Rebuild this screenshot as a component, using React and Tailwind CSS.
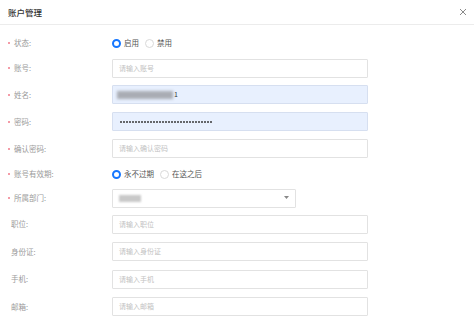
import React from "react";

const F = { fontFamily: '"Noto Sans CJK SC", "Noto Sans", sans-serif' };

function Label({ text, req }) {
  return (
    <div className={`w-[112px] shrink-0 flex items-center text-[7.5px] text-[#9a9a9a] ${req ? "pl-[8px]" : "pl-[11px]"}`}>
      {req && <span className="w-[2px] h-[2px] rounded-full bg-[#f07a8a] mr-[4px]" />}
      <span>{text}</span>
    </div>
  );
}

function Input({ ph, filled, children, w = "w-[256px]" }) {
  return (
    <div
      className={`${w} h-[19px] border rounded-[1px] flex items-center px-[6px] text-[7px] ${
        filled ? "bg-[#e8f0fe] border-[#d6dff0]" : "bg-white border-[#e2e2e2]"
      }`}
    >
      {children || <span className="text-[#c2c2c2]">{ph}</span>}
    </div>
  );
}

function Radio({ on, text }) {
  return (
    <div className="flex items-center mr-[6px]">
      <span
        className={`w-[9px] h-[9px] rounded-full box-border ${
          on ? "border-[2px] border-[#1677ff]" : "border border-[#d9d9d9]"
        }`}
      />
      <span className="ml-[3px] text-[7.5px] text-[#555]">{text}</span>
    </div>
  );
}

function Row({ h, label, req, children }) {
  return (
    <div className={`flex items-center ${h}`}>
      <Label text={label} req={req} />
      {children}
    </div>
  );
}

const dots = Array.from({ length: 31 });

export default function App() {
  return (
    <div className="w-[474px] h-[330px] bg-white overflow-hidden" style={F}>
      <div className="h-[25px] border-b border-[#ececec] flex items-center justify-between pl-[8px] pr-[6px]">
        <span className="text-[8.5px] text-[#333] font-medium">账户管理</span>
        <svg width="8" height="8" viewBox="0 0 8 8" className="mr-[1px]">
          <path d="M1 1 L7 7 M7 1 L1 7" stroke="#8a8a8a" strokeWidth="1" />
        </svg>
      </div>
      <div className="pt-[6px]">
        <Row h="h-[24px]" label="状态:" req>
          <div className="flex items-center">
            <Radio on text="启用" />
            <Radio text="禁用" />
          </div>
        </Row>
        <Row h="h-[26px]" label="账号:" req>
          <Input ph="请输入账号" />
        </Row>
        <Row h="h-[27px]" label="姓名:" req>
          <Input filled>
            <span className="w-[56px] h-[8px] bg-[#a9acb4] blur-[1.5px] ml-[-2px]" />
            <span className="text-[#333] ml-[1px]">1</span>
          </Input>
        </Row>
        <Row h="h-[27px]" label="密码:" req>
          <Input filled>
            <div className="flex items-center ml-[1px]">
              {dots.map((_, i) => (
                <span key={i} className="w-[2px] h-[2px] rounded-full bg-[#3a3a3a] mr-[1px]" />
              ))}
            </div>
          </Input>
        </Row>
        <Row h="h-[27px]" label="确认密码:" req>
          <Input ph="请输入确认密码" />
        </Row>
        <Row h="h-[24px]" label="账号有效期:" req>
          <div className="flex items-center">
            <Radio on text="永不过期" />
            <Radio text="在这之后" />
          </div>
        </Row>
        <Row h="h-[24px]" label="所属部门:" req>
          <div className="w-[184px] h-[19px] border border-[#e2e2e2] rounded-[1px] flex items-center justify-between px-[6px]">
            <span className="w-[22px] h-[7px] bg-[#c9c9c9] blur-[1px]" />
            <svg width="5" height="4" viewBox="0 0 5 4">
              <path d="M0 0 L5 0 L2.5 3 Z" fill="#888" />
            </svg>
          </div>
        </Row>
        <Row h="h-[28px]" label="职位:">
          <Input ph="请输入职位" />
        </Row>
        <Row h="h-[27px]" label="身份证:">
          <Input ph="请输入身份证" />
        </Row>
        <Row h="h-[28px]" label="手机:">
          <Input ph="请输入手机" />
        </Row>
        <Row h="h-[27px]" label="邮箱:">
          <Input ph="请输入邮箱" />
        </Row>
      </div>
    </div>
  );
}
